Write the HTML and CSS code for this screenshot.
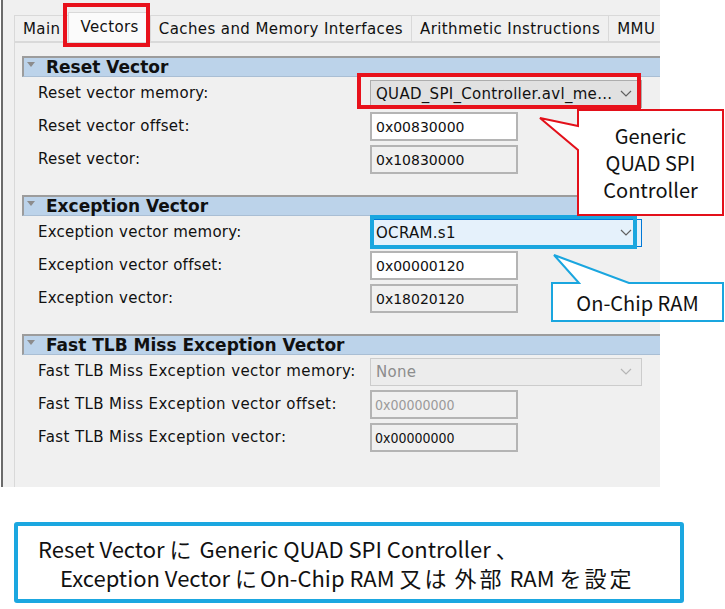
FILE: index.html
```html
<!DOCTYPE html>
<html>
<head>
  <title>Vectors</title>
  <link rel="stylesheet" href="styles.css">
</head>
<body>
  <div class="stage">
    <div class="panel">
      <div class="tabs">
        <div class="tab">Main</div>
        <div class="tab tab-active">Vectors</div>
        <div class="tab">Caches and Memory Interfaces</div>
        <div class="tab">Arithmetic Instructions</div>
        <div class="tab">MMU</div>
      </div>

      <div class="page">
        <section class="group">
          <div class="group-head"><span class="caret"></span>Reset Vector</div>
          <div class="rows">
            <div class="label">Reset vector memory:</div>
            <div class="combo combo-grey">
              <span class="combo-text">QUAD_SPI_Controller.avl_me...</span>
              <svg class="chevron" width="12" height="7" viewBox="0 0 12 7"><path d="M1 1 L6 6 L11 1" /></svg>
            </div>
            <div class="label">Reset vector offset:</div>
            <div class="field">0x00830000</div>
            <div class="label">Reset vector:</div>
            <div class="field field-ro">0x10830000</div>
          </div>
        </section>

        <section class="group">
          <div class="group-head"><span class="caret"></span>Exception Vector</div>
          <div class="rows">
            <div class="label">Exception vector memory:</div>
            <div class="combo combo-focus">
              <span class="combo-text">OCRAM.s1</span>
              <svg class="chevron" width="12" height="7" viewBox="0 0 12 7"><path d="M1 1 L6 6 L11 1" /></svg>
            </div>
            <div class="label">Exception vector offset:</div>
            <div class="field">0x00000120</div>
            <div class="label">Exception vector:</div>
            <div class="field field-ro">0x18020120</div>
          </div>
        </section>

        <section class="group group-tlb">
          <div class="group-head"><span class="caret"></span>Fast TLB Miss Exception Vector</div>
          <div class="rows">
            <div class="label">Fast TLB Miss Exception vector memory:</div>
            <div class="combo combo-off">
              <span class="combo-text">None</span>
              <svg class="chevron" width="12" height="7" viewBox="0 0 12 7"><path d="M1 1 L6 6 L11 1" /></svg>
            </div>
            <div class="label">Fast TLB Miss Exception vector offset:</div>
            <div class="field field-ro field-off">0x00000000</div>
            <div class="label">Fast TLB Miss Exception vector:</div>
            <div class="field field-ro">0x00000000</div>
          </div>
        </section>
      </div>
    </div>

    <!-- highlight marks laid over the screenshot -->
    <div class="mark mark-tab"></div>
    <div class="mark mark-reset"></div>
    <div class="mark mark-blue"></div>

    <div class="callout callout-red">
      <svg class="callout-shape" width="187" height="109" viewBox="0 0 187 109">
        <path d="M40 2 H185 V107 H40 V42 L2 10 L40 18 Z" />
      </svg>
      <div class="callout-text">Generic<br>QUAD SPI<br>Controller</div>
    </div>

    <div class="callout callout-blue">
      <svg class="callout-shape" width="177" height="73" viewBox="0 0 177 73">
        <path d="M4 33 H31 L6 5 L81 33 H175 V71 H4 Z" />
      </svg>
      <div class="callout-text">On-Chip RAM</div>
    </div>
  </div>

  <div class="note">
    <p>Reset Vector <span class="jp">に</span> Generic QUAD SPI Controller <span class="jp">、</span></p>
    <p class="note-indent">Exception Vector <span class="jp">に</span>On-Chip RAM <span class="jp">又は</span> <span class="jp">外部</span> RAM <span class="jp">を設定</span></p>
  </div>
</body>
</html>
```

FILE: styles.css
```css
body, p {
  margin: 0;
  padding: 0;
}

body {
  background-color: #fff;
  font-family: "DejaVu Sans", sans-serif;
  color: #111;
}

.stage {
  position: relative;
  width: 725px;
  height: 487px;
}

.panel {
  margin-left: 1px;
  width: 659px;
  height: 487px;
  box-sizing: border-box;
  border-left: 2px solid #6b6b6b;
  background-color: #f0f0f0;
  padding: 15px 0 0 11px;
  overflow: hidden;
}

/* tabs */

.tabs {
  display: flex;
  height: 27px;
  align-items: flex-end;
}

.tab {
  height: 27px;
  box-sizing: border-box;
  padding: 0 8px;
  border: 1px solid #d9d9d9;
  border-right: none;
  line-height: 26px;
  font-size: 15px;
  letter-spacing: 0.4px;
  white-space: nowrap;
  background-color: #f0f0f0;
}

.tab-active {
  height: 31px;
  padding: 0 11px;
  margin-bottom: -1px;
  line-height: 28px;
  background-color: #fbfbfb;
  position: relative;
}

/* page */

.page {
  border-top: 1px solid #d9d9d9;
  border-left: 1px solid #d9d9d9;
  padding: 13px 0 0 7px;
  height: 100%;
}

.group {
  margin-bottom: 21px;
}

.group-head {
  height: 21px;
  box-sizing: border-box;
  border-top: 2px solid #9c9c9c;
  border-left: 2px solid #9c9c9c;
  border-bottom: 1px solid #a9bed4;
  background-color: #bcd3ea;
  display: flex;
  align-items: center;
  padding-left: 3px;
  font-size: 17px;
  font-weight: bold;
  color: #101010;
  white-space: nowrap;
}

.caret {
  width: 0;
  height: 0;
  border-left: 4px solid transparent;
  border-right: 4px solid transparent;
  border-top: 5px solid #8c8c8c;
  margin: -6px 11px 0 0;
}

.rows {
  display: grid;
  grid-template-columns: 332px auto;
  grid-auto-rows: 29px;
  row-gap: 4px;
  margin-top: 2px;
  padding-left: 16px;
  align-items: center;
}

.label {
  font-size: 15px;
  letter-spacing: 0.25px;
  white-space: nowrap;
  padding-bottom: 2px;
}

.group-tlb .label {
  letter-spacing: 0.4px;
}

/* fields */

.combo {
  width: 272px;
  height: 28px;
  box-sizing: border-box;
  border: 1px solid #adadad;
  display: flex;
  align-items: center;
  justify-content: space-between;
  padding: 0 9px 0 5px;
  font-size: 15px;
  letter-spacing: 0.3px;
}

.combo-grey {
  background-color: #e1e1e1;
}

.combo-focus {
  background-color: #e5f1fb;
  border-color: #0078d7;
}

.combo-off {
  background-color: #ececec;
  border-color: #cccccc;
  color: #8d8d8d;
}

.combo-text {
  white-space: nowrap;
}

.chevron path {
  fill: none;
  stroke: #606060;
  stroke-width: 1.2;
}

.combo-off .chevron path {
  stroke: #b5b5b5;
}

.field {
  width: 148px;
  height: 29px;
  box-sizing: border-box;
  border: 2px solid #b4b4b4;
  background-color: #fff;
  padding-left: 4px;
  display: flex;
  align-items: center;
  font-size: 14px;
}

.field-ro {
  background-color: #f0f0f0;
}

.field-off {
  color: #9a9a9a;
}

.group-tlb .field {
  font-family: "DejaVu Sans Condensed", "DejaVu Sans", sans-serif;
  font-stretch: condensed;
  padding-left: 3px;
}

/* marks and callouts */

.mark {
  position: absolute;
  border: 4px solid #e8111b;
}

.mark-tab {
  left: 63px;
  top: 3px;
  width: 79px;
  height: 36px;
}

.mark-reset {
  left: 357px;
  top: 73px;
  width: 276px;
  height: 28px;
}

.mark-blue {
  left: 370px;
  top: 215px;
  width: 259px;
  height: 26px;
  border-color: #1aa6df;
}

.callout {
  position: absolute;
  font-family: "Noto Sans CJK JP", "Noto Sans", sans-serif;
  color: #111;
}

.callout-shape {
  position: absolute;
  left: 0;
  top: 0;
}

.callout-shape path {
  fill: #fff;
  stroke-width: 2;
}

.callout-red {
  left: 538px;
  top: 108px;
  width: 187px;
  height: 109px;
}

.callout-red path {
  stroke: #e3101a;
}

.callout-red .callout-text {
  position: absolute;
  left: 40px;
  top: 2px;
  width: 145px;
  height: 105px;
  display: flex;
  align-items: center;
  justify-content: center;
  text-align: center;
  font-size: 20px;
  line-height: 27px;
}

.callout-blue {
  left: 548px;
  top: 250px;
  width: 177px;
  height: 73px;
}

.callout-blue path {
  stroke: #1aa6df;
}

.callout-blue .callout-text {
  position: absolute;
  left: 4px;
  top: 33px;
  width: 171px;
  height: 38px;
  display: flex;
  align-items: center;
  justify-content: center;
  font-size: 20px;
}

/* summary box */

.note {
  margin: 35px 0 0 14px;
  width: 670px;
  box-sizing: border-box;
  border: 4px solid #1ba7e0;
  border-radius: 3px;
  padding: 8px 0 7px 20px;
  font-family: "Noto Sans CJK JP", "Noto Sans", sans-serif;
  font-size: 22px;
  line-height: 29px;
  color: #111;
}

.note p {
  height: 29px;
  white-space: nowrap;
}

.note .jp {
  letter-spacing: 3px;
}

.note-indent {
  padding-left: 22px;
}
```
